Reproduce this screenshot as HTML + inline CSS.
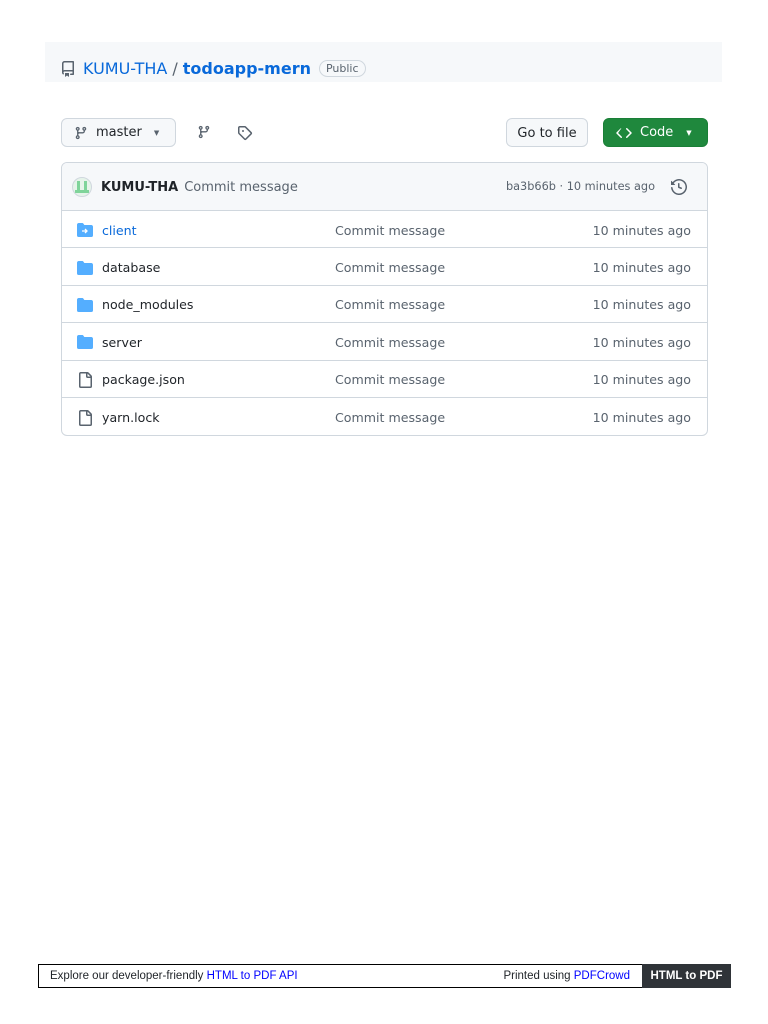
<!DOCTYPE html>
<html><head><meta charset="utf-8"><style>
*{box-sizing:border-box;margin:0;padding:0}
body{width:768px;height:1024px;background:#fff;font-family:"DejaVu Sans","Liberation Sans",sans-serif;color:#1f2328;position:relative;font-size:12.5px}
.hdr{position:absolute;left:45px;top:42px;width:677px;height:40px;background:#f6f8fa}
.title{position:absolute;left:60px;top:59px;display:flex;align-items:center;font-size:16px;white-space:nowrap}
.title a{color:#0969da;text-decoration:none}
.pub{border:1px solid #d0d7de;border-radius:10px;font-size:11px;color:#59636e;padding:1px 6px;margin-left:8px}
.btn{position:absolute;border:1px solid #d0d7de;border-radius:6px;background:#f6f8fa;display:flex;align-items:center;font-size:13px}
.box{position:absolute;left:61px;top:162px;width:647px;height:274px;border:1px solid #d0d7de;border-radius:6px;overflow:hidden}
.bh{height:48px;background:#f6f8fa;border-bottom:1px solid #d0d7de;display:flex;align-items:center;padding:0 16px 0 10px;position:relative}
.row{height:37.4px;border-bottom:1px solid #d0d7de;display:flex;align-items:center;position:relative;font-size:12.6px;padding-top:2px}
.row:last-child{border-bottom:none}
.row .n{position:absolute;left:40px}
.row .m{position:absolute;left:273px;color:#59636e}
.row .t{position:absolute;right:16px;color:#59636e}
.row svg{position:absolute;left:15px}
.foot{position:absolute;left:38px;top:964px;width:693px;height:24px;border:1px solid #000;font-family:"Liberation Sans",sans-serif;font-size:11.5px;display:flex;align-items:center}
.foot a{color:#00f}
</style></head><body>
<div class="hdr"></div>
<div class="title">
<svg width="16" height="16" viewBox="0 0 16 16" style="margin-right:7px" fill="#59636e"><path d="M2 2.5A2.5 2.5 0 0 1 4.5 0h8.75a.75.75 0 0 1 .75.75v12.5a.75.75 0 0 1-.75.75h-2.5a.75.75 0 0 1 0-1.5h1.75v-2h-8a1 1 0 0 0-.71 1.71.75.75 0 0 1-1.07 1.05A2.5 2.5 0 0 1 2 11.5Zm10.5-1h-8a1 1 0 0 0-1 1v6.71A2.5 2.5 0 0 1 4.5 9h8ZM5 12.25a.25.25 0 0 1 .25-.25h3.5a.25.25 0 0 1 .25.25v3.25a.25.25 0 0 1-.4.2l-1.45-1.09a.25.25 0 0 0-.3 0L5.4 15.7a.25.25 0 0 1-.4-.2Z"/></svg>
<a>KUMU-THA</a><span style="color:#59636e;margin:0 5px">/</span><a style="font-weight:bold">todoapp-mern</a><span class="pub">Public</span></div>

<div class="btn" style="left:61px;top:118px;width:115px;height:29px;padding-left:12px">
<svg width="14" height="14" viewBox="0 0 16 16" fill="#59636e"><path d="M9.5 3.25a2.25 2.25 0 1 1 3 2.12V6A2.5 2.5 0 0 1 10 8.5H6a1 1 0 0 0-1 1v1.130a2.25 2.25 0 1 1-1.5 0V5.37a2.25 2.25 0 1 1 1.5 0v1.53A2.5 2.5 0 0 1 6 7h4a1 1 0 0 0 1-1v-.63A2.25 2.25 0 0 1 9.5 3.25Zm-6 0a.75.75 0 1 0 1.5 0 .75.75 0 0 0-1.5 0Zm8.25-.75a.75.75 0 1 0 0 1.5.75.75 0 0 0 0-1.5ZM4.25 12a.75.75 0 1 0 0 1.5.75.75 0 0 0 0-1.5Z"/></svg>
<span style="margin-left:8px">master</span><span style="margin-left:12px;font-size:7px;color:#59636e">▼</span></div>
<svg style="position:absolute;left:197px;top:125px" width="14" height="14" viewBox="0 0 16 16" fill="#59636e"><path d="M9.5 3.25a2.25 2.25 0 1 1 3 2.12V6A2.5 2.5 0 0 1 10 8.5H6a1 1 0 0 0-1 1v1.13a2.25 2.25 0 1 1-1.5 0V5.37a2.25 2.25 0 1 1 1.5 0v1.53A2.5 2.5 0 0 1 6 7h4a1 1 0 0 0 1-1v-.63A2.25 2.25 0 0 1 9.5 3.25Zm-6 0a.75.75 0 1 0 1.5 0 .75.75 0 0 0-1.5 0Zm8.25-.75a.75.75 0 1 0 0 1.5.75.75 0 0 0 0-1.5ZM4.25 12a.75.75 0 1 0 0 1.5.75.75 0 0 0 0-1.5Z"/></svg>
<svg style="position:absolute;left:237px;top:125px" width="16" height="16" viewBox="0 0 16 16" fill="#59636e"><path d="M1 7.78V2.75C1 1.78 1.78 1 2.75 1h5.03c.46 0 .9.18 1.23.51l5.5 5.5a1.75 1.75 0 0 1 0 2.47l-5.03 5.03a1.75 1.75 0 0 1-2.47 0l-5.5-5.5A1.75 1.75 0 0 1 1 7.78Zm1.5 0c0 .07.03.13.07.18l5.5 5.5a.25.25 0 0 0 .35 0l5.03-5.03a.25.25 0 0 0 0-.35l-5.5-5.5a.25.25 0 0 0-.18-.08H2.75a.25.25 0 0 0-.25.25ZM6 5a1 1 0 1 1 0 2 1 1 0 0 1 0-2Z"/></svg>

<div class="btn" style="left:506px;top:118px;width:82px;height:29px;justify-content:center;padding-top:1px">Go to file</div>
<div class="btn" style="left:603px;top:118px;width:105px;height:29px;background:#1f883d;border-color:#1a7f37;color:#fff;padding-left:12px">
<svg width="16" height="16" viewBox="0 0 16 16" fill="#fff"><path d="m11.28 3.22 4.25 4.25a.75.75 0 0 1 0 1.06l-4.25 4.25a.75.75 0 0 1-1.06-1.06L13.94 8l-3.72-3.72a.75.75 0 0 1 1.06-1.06Zm-6.56 0a.75.75 0 0 1 0 1.06L2.06 8l3.72 3.72a.75.75 0 0 1-1.06 1.06L.47 8.53a.75.75 0 0 1 0-1.06l4.25-4.25a.75.75 0 0 1 1.06 0Z"/></svg>
<span style="margin-left:8px">Code</span><span style="margin-left:13px;font-size:7px">▼</span></div>

<div class="box">
<div class="bh">
<div style="width:20px;height:20px;border-radius:50%;background:#e6f4ea;border:1px solid #d0d7de;position:relative;overflow:hidden"><div style="position:absolute;left:4px;top:3px;width:3px;height:10px;background:#7fd49a"></div><div style="position:absolute;left:11px;top:3px;width:3px;height:10px;background:#7fd49a"></div><div style="position:absolute;left:2px;top:12px;width:14px;height:3px;background:#7fd49a"></div></div>
<b style="margin-left:9px;font-size:13px;padding-top:1px">KUMU-THA</b><span style="margin-left:6px;color:#59636e;font-size:13px;padding-top:1px">Commit message</span>
<span style="position:absolute;right:52px;color:#59636e;font-size:11.3px">ba3b66b · 10 minutes ago</span>
<svg style="position:absolute;right:20px" width="16" height="16" viewBox="0 0 16 16" fill="#59636e"><path d="m.427 1.927 1.215 1.215a8.002 8.002 0 1 1-1.6 5.685.75.75 0 1 1 1.493-.154 6.5 6.5 0 1 0 1.18-4.458l1.358 1.358A.25.25 0 0 1 3.896 6H.25A.25.25 0 0 1 0 5.75V2.104a.25.25 0 0 1 .427-.177ZM7.750 4a.75.75 0 0 1 .75.75v2.992l2.028.812a.75.75 0 0 1-.557 1.392l-2.5-1A.751.751 0 0 1 7 8.25v-3.5A.75.75 0 0 1 7.75 4Z"/></svg>
</div>
<div class="row"><svg width="16" height="16" viewBox="0 0 16 16" fill="#54aeff"><path d="M1.75 1h3.5c.55 0 .9.3 1.2.7l.9 1.3h6.9c.97 0 1.75.78 1.75 1.75v8.5A1.75 1.75 0 0 1 14.25 15H1.75A1.75 1.75 0 0 1 0 13.25V2.75C0 1.78.78 1 1.75 1Z"/><path d="M5 9h5M8 7l2 2-2 2" stroke="#fff" stroke-width="1.3" fill="none"/></svg><span class="n" style="color:#0969da">client</span><span class="m">Commit message</span><span class="t">10 minutes ago</span></div>
<div class="row"><svg width="16" height="16" viewBox="0 0 16 16" fill="#54aeff"><path d="M1.75 1h3.5c.55 0 .9.3 1.2.7l.9 1.3h6.9c.97 0 1.75.78 1.75 1.75v8.5A1.75 1.75 0 0 1 14.25 15H1.75A1.75 1.75 0 0 1 0 13.25V2.75C0 1.78.78 1 1.75 1Z"/></svg><span class="n">database</span><span class="m">Commit message</span><span class="t">10 minutes ago</span></div>
<div class="row"><svg width="16" height="16" viewBox="0 0 16 16" fill="#54aeff"><path d="M1.75 1h3.5c.55 0 .9.3 1.2.7l.9 1.3h6.9c.97 0 1.75.78 1.75 1.75v8.5A1.75 1.75 0 0 1 14.25 15H1.75A1.75 1.75 0 0 1 0 13.25V2.75C0 1.78.78 1 1.75 1Z"/></svg><span class="n">node_modules</span><span class="m">Commit message</span><span class="t">10 minutes ago</span></div>
<div class="row"><svg width="16" height="16" viewBox="0 0 16 16" fill="#54aeff"><path d="M1.75 1h3.5c.55 0 .9.3 1.2.7l.9 1.3h6.9c.97 0 1.75.78 1.75 1.75v8.5A1.75 1.75 0 0 1 14.25 15H1.75A1.75 1.75 0 0 1 0 13.25V2.75C0 1.78.78 1 1.75 1Z"/></svg><span class="n">server</span><span class="m">Commit message</span><span class="t">10 minutes ago</span></div>
<div class="row"><svg width="16" height="16" viewBox="0 0 16 16" fill="#59636e"><path d="M2 1.75C2 .78 2.78 0 3.75 0h6.59c.46 0 .91.18 1.24.51l2.91 2.91c.33.33.51.78.51 1.24v9.59A1.75 1.75 0 0 1 13.25 16h-9.5A1.75 1.75 0 0 1 2 14.25Zm1.75-.25a.25.25 0 0 0-.25.25v12.5c0 .14.11.25.25.25h9.5a.25.25 0 0 0 .25-.25V6h-2.75A1.75 1.75 0 0 1 9 4.25V1.5Zm6.75.06V4.25c0 .14.11.25.25.25h2.69l-.03-.03-2.88-2.88Z"/></svg><span class="n">package.json</span><span class="m">Commit message</span><span class="t">10 minutes ago</span></div>
<div class="row"><svg width="16" height="16" viewBox="0 0 16 16" fill="#59636e"><path d="M2 1.75C2 .78 2.78 0 3.75 0h6.59c.46 0 .91.18 1.24.51l2.91 2.91c.33.33.51.78.51 1.24v9.59A1.75 1.75 0 0 1 13.25 16h-9.5A1.75 1.75 0 0 1 2 14.25Zm1.75-.25a.25.25 0 0 0-.25.25v12.5c0 .14.11.25.25.25h9.5a.25.25 0 0 0 .25-.25V6h-2.75A1.75 1.75 0 0 1 9 4.25V1.5Zm6.75.06V4.25c0 .14.11.25.25.25h2.69l-.03-.03-2.88-2.88Z"/></svg><span class="n">yarn.lock</span><span class="m">Commit message</span><span class="t">10 minutes ago</span></div>
</div>

<div class="foot"><span style="margin-left:11px">Explore our developer-friendly <a>HTML to PDF API</a></span>
<span style="position:absolute;right:100px">Printed using <a>PDFCrowd</a></span>
<span style="position:absolute;right:-1px;top:-1px;height:24px;width:89px;background:#2f3338;color:#fff;font-weight:bold;display:flex;align-items:center;justify-content:center">HTML to PDF</span></div>
</body></html>
